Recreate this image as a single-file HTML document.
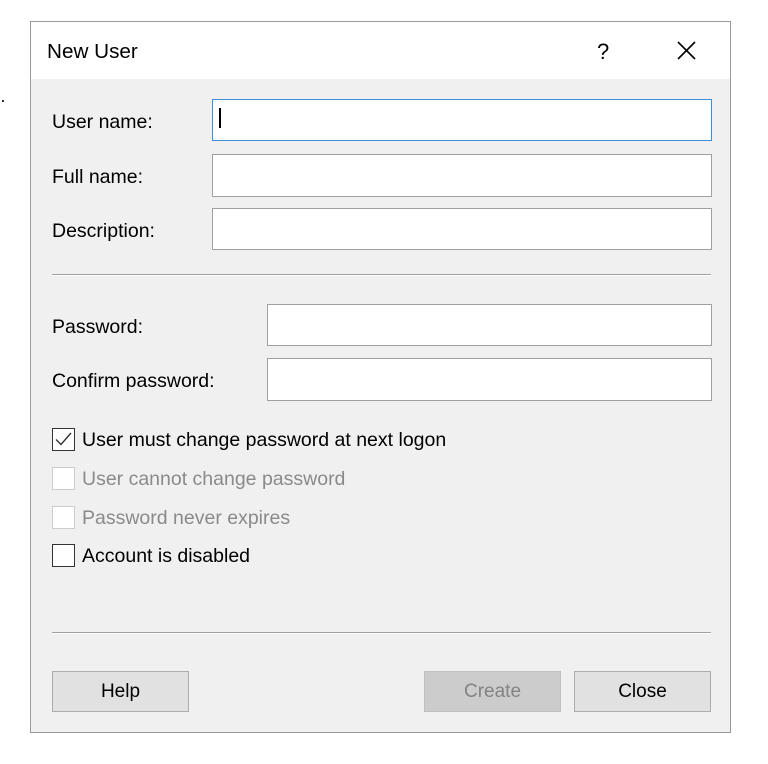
<!DOCTYPE html>
<html><head><meta charset="utf-8"><style>
*{margin:0;padding:0;box-sizing:border-box}
body{width:768px;height:764px;background:#fff;position:relative;font-family:"Liberation Sans",sans-serif;overflow:hidden;color:#000}
.dlg{position:absolute;left:30px;top:21px;width:701px;height:712px;border:1px solid #9a9a9a;background:#f0f0f0}
.title{position:absolute;left:0;top:0;width:699px;height:57px;background:#fff}
.abs{position:absolute}
.t{font-size:19.5px;white-space:nowrap}
.inp{position:absolute;background:#fff;border:1px solid #a0a0a0}
.sep{position:absolute;height:2px;border-top:1px solid #a0a0a0;border-bottom:1px solid #fff}
.cb{position:absolute;width:23px;height:23px;border:1px solid #333;background:#fff}
.cb.dis{border-color:#ccc}
.btn{position:absolute;height:41px;width:137px;border:1px solid #adadad;background:#e1e1e1;font-size:19px;text-align:center;line-height:39px}
</style></head><body>
<div class="abs" style="left:2px;top:100px;width:2px;height:2px;background:#333"></div>
<div class="dlg">
<div class="title"></div>
<div class="abs t" style="left:16px;top:18px;font-size:20.7px">New User</div>
<div class="abs t" style="left:566px;top:17px;font-size:22px">?</div>
<svg class="abs" style="left:646px;top:19px" width="19" height="19" viewBox="0 0 19 19"><path d="M1 1L18 18M18 1L1 18" stroke="#000" stroke-width="1.6"/></svg>

<div class="abs t" style="left:21px;top:89px">User name:</div>
<div class="abs t" style="left:21px;top:144px">Full name:</div>
<div class="abs t" style="left:21px;top:198px">Description:</div>
<div class="inp" style="left:181px;top:77px;width:500px;height:42px;border-color:#3b8fdc"></div>
<div class="abs" style="left:188px;top:86px;width:2px;height:20px;background:#000"></div>
<div class="inp" style="left:181px;top:132px;width:500px;height:43px"></div>
<div class="inp" style="left:181px;top:186px;width:500px;height:42px"></div>
<div class="sep" style="left:21px;top:252px;width:659px"></div>

<div class="abs t" style="left:21px;top:294px">Password:</div>
<div class="abs t" style="left:21px;top:348px">Confirm password:</div>
<div class="inp" style="left:236px;top:282px;width:445px;height:42px"></div>
<div class="inp" style="left:236px;top:336px;width:445px;height:43px"></div>

<div class="cb" style="left:21px;top:406px"><svg width="21" height="21" viewBox="0 0 21 21"><path d="M3 10.5L8 15.5L18 4" stroke="#333" stroke-width="1.4" fill="none"/></svg></div>
<div class="abs t" style="left:51px;top:407px">User must change password at next logon</div>
<div class="cb dis" style="left:21px;top:445px"></div>
<div class="abs t" style="left:51px;top:446px;color:#8a8a8a">User cannot change password</div>
<div class="cb dis" style="left:21px;top:484px"></div>
<div class="abs t" style="left:51px;top:485px;color:#8a8a8a">Password never expires</div>
<div class="cb" style="left:21px;top:522px"></div>
<div class="abs t" style="left:51px;top:523px">Account is disabled</div>

<div class="sep" style="left:21px;top:610px;width:659px"></div>
<div class="btn" style="left:21px;top:649px">Help</div>
<div class="btn" style="left:393px;top:649px;background:#cccccc;border-color:#bfbfbf;color:#838383">Create</div>
<div class="btn" style="left:543px;top:649px">Close</div>
</div>
</body></html>
